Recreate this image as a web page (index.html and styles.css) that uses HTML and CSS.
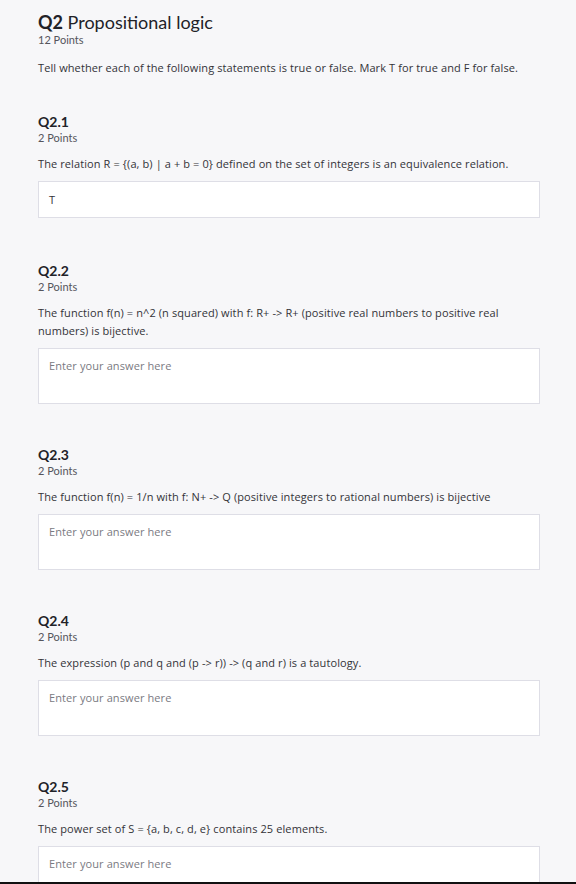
FILE: index.html
```html
<!DOCTYPE html>
<html lang="en">
<head>
<meta charset="utf-8">
<title>Q2 Propositional logic</title>
<link rel="stylesheet" href="styles.css">
</head>
<body>
<main class="page">
  <header class="group">
    <h1 class="group-title"><strong>Q2</strong> Propositional logic</h1>
    <div class="points">12 Points</div>
    <p class="group-desc">Tell whether each of the following statements is true or false. Mark T for true and F for false.</p>
  </header>

  <section class="question">
    <h2 class="q-title">Q2.1</h2>
    <div class="points">2 Points</div>
    <p class="q-text">The relation R = {(a, b) | a + b = 0} defined on the set of integers is an equivalence relation.</p>
    <div class="answer answer-filled">T</div>
  </section>

  <section class="question">
    <h2 class="q-title">Q2.2</h2>
    <div class="points">2 Points</div>
    <p class="q-text">The function f(n) = n^2 (n squared) with f: R+ -&gt; R+ (positive real numbers to positive real numbers) is bijective.</p>
    <div class="answer answer-empty">Enter your answer here</div>
  </section>

  <section class="question">
    <h2 class="q-title">Q2.3</h2>
    <div class="points">2 Points</div>
    <p class="q-text">The function f(n) = 1/n with f: N+ -&gt; Q (positive integers to rational numbers) is bijective</p>
    <div class="answer answer-empty">Enter your answer here</div>
  </section>

  <section class="question">
    <h2 class="q-title">Q2.4</h2>
    <div class="points">2 Points</div>
    <p class="q-text">The expression (p and q and (p -&gt; r)) -&gt; (q and r) is a tautology.</p>
    <div class="answer answer-empty">Enter your answer here</div>
  </section>

  <section class="question">
    <h2 class="q-title">Q2.5</h2>
    <div class="points">2 Points</div>
    <p class="q-text">The power set of S = {a, b, c, d, e} contains 25 elements.</p>
    <div class="answer answer-empty">Enter your answer here</div>
  </section>
</main>
<div class="bottom-bar"></div>
</body>
</html>
```

FILE: styles.css
```css
html, body {
  margin: 0;
  padding: 0;
}
body {
  background: #f7f7f9;
  font-family: Lato, "Open Sans", "Liberation Sans", sans-serif;
  color: #333338;
  overflow: hidden;
}
.page {
  width: 502px;
  padding: 11px 0 0 38px;
}
.group-title {
  margin: 0;
  font-size: 18px;
  line-height: 22px;
  font-weight: 400;
  color: #222228;
}
.group-title strong {
  font-weight: 700;
}
.points {
  font-size: 11px;
  line-height: 14px;
  color: #55555c;
}
.group-desc,
.q-text,
.answer {
  font-family: "Open Sans", Lato, "Liberation Sans", sans-serif;
  font-size: 11px;
  letter-spacing: 0.1px;
  line-height: 18px;
}
.group-desc {
  margin: 12px 0 0;
}
.question {
  display: flex;
  flex-direction: column;
}
.group + .question {
  margin-top: 36px;
}
.question + .question {
  margin-top: 42px;
}
.q-title {
  margin: 0;
  font-size: 14px;
  line-height: 18px;
  font-weight: 700;
  color: #222228;
}
.q-text {
  margin: 10px 0 0;
}
.answer {
  margin-top: 8px;
  background: #ffffff;
  border: 1px solid #dedee6;
  padding: 0 10px;
  box-sizing: border-box;
}
.answer-filled {
  height: 37px;
  margin-bottom: 2px;
  display: flex;
  align-items: center;
  color: #333338;
}
.answer-empty {
  height: 56px;
  padding-top: 8px;
  color: #7a7a82;
}
.bottom-bar {
  position: fixed;
  left: 0;
  right: 0;
  bottom: 0;
  height: 2px;
  background: #111;
}
```
